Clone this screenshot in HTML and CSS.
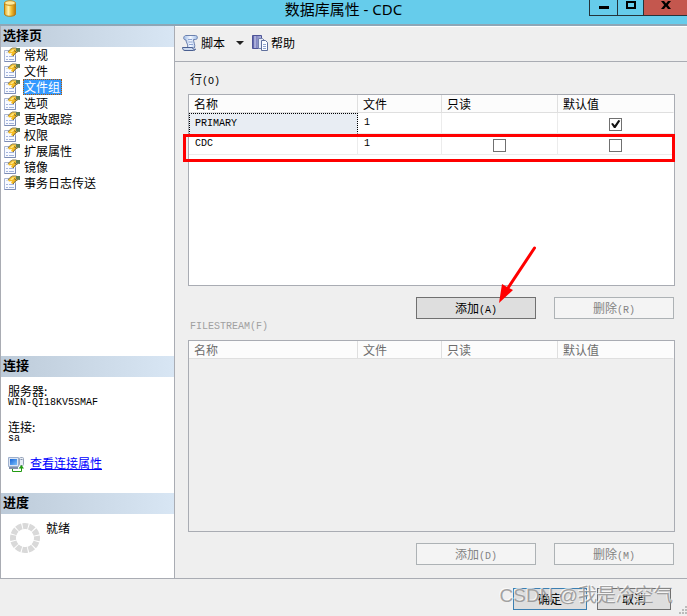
FILE: index.html
```html
<!DOCTYPE html>
<html lang="zh-CN">
<head>
<meta charset="utf-8">
<title>数据库属性 - CDC</title>
<link rel="stylesheet" href="styles.css">
</head>
<body>
<svg width="0" height="0" class="defs" aria-hidden="true">
  <defs>
    <linearGradient id="gold" x1="0" x2="1"><stop offset="0" stop-color="#e3a51c"/><stop offset=".35" stop-color="#fff3b0"/><stop offset=".6" stop-color="#f5c336"/><stop offset="1" stop-color="#b87506"/></linearGradient>
    <linearGradient id="book" x1="0" x2="1"><stop offset="0" stop-color="#5a5fa8"/><stop offset="1" stop-color="#b4b9e2"/></linearGradient>
    <linearGradient id="scroll" x1="0" x2="1"><stop offset="0" stop-color="#9fbbe6"/><stop offset=".5" stop-color="#f4f8ff"/><stop offset="1" stop-color="#9fbbe6"/></linearGradient>
    <linearGradient id="screen" x1="0" y1="0" x2="1" y2="1"><stop offset="0" stop-color="#1765d8"/><stop offset="1" stop-color="#7cc0fb"/></linearGradient>
    <symbol id="page" viewBox="0 0 16 16">
      <path d="M.5 3.500h11v11h-11z" fill="#f8faff" stroke="#a9b5d2"/>
      <path d="M.5 14.500h11v-6" fill="none" stroke="#7d8db5"/>
      <path d="M2 9.500h2m1 0h5M2 12.500h2m1 0h5" stroke="#a3b5de"/>
      <path d="M2 5.500h2" stroke="#d2daec"/>
      <path d="M4 5l2-2.500L8.500 1l4 .5V5L11 6.500 9 9 7 8l1-2-3 .5z" fill="#f5bd25"/>
      <path d="M4 5l2-2.500L8.500 1h4" fill="none" stroke="#8d8258"/>
      <path d="M6 5l2.500-2.500H11L8 5z" fill="#ffe987"/>
      <path d="M12 1h4v4l-4-.5z" fill="#5f7d55"/>
      <path d="M9 9l2.500-3 2.500-1.500M10 3.500l2 1.500" fill="none" stroke="#80631d"/>
    </symbol>
  </defs>
</svg>
<header class="titlebar">
  <svg class="db-icon" viewBox="0 0 12 17" aria-hidden="true"><path d="M.5 3v11c0 3 11 3 11 0V3z" fill="url(#gold)" stroke="#b67b12"/><ellipse cx="6" cy="3" rx="5.500" ry="2.300" fill="#ffe99a" stroke="#c18b1d"/></svg>
  <h1>数据库属性 - CDC</h1>
  <div class="window-controls">
    <button class="minimize" aria-label="最小化"><svg viewBox="0 0 12 12"><path d="M1 6h10v3H1z"/></svg></button>
    <button class="maximize" aria-label="最大化"><svg viewBox="0 0 12 12"><path fill-rule="evenodd" d="M1 1h10v8H1zM3 3v4h6V3z"/></svg></button>
    <button class="close" aria-label="关闭"><svg viewBox="0 0 12 12"><path d="M1 1h3l2 2.500L8 1h3L7.800 5 11 9H8L6 6.500 4 9H1l3.200-4z"/></svg></button>
  </div>
</header>
<div class="workspace">
  <aside class="sidebar">
    <h2>选择页</h2>
    <nav class="pages">
      <a href="#"><svg><use href="#page"/></svg><span>常规</span></a>
      <a href="#"><svg><use href="#page"/></svg><span>文件</span></a>
      <a href="#" class="selected" aria-current="page"><svg><use href="#page"/></svg><span>文件组</span></a>
      <a href="#"><svg><use href="#page"/></svg><span>选项</span></a>
      <a href="#"><svg><use href="#page"/></svg><span>更改跟踪</span></a>
      <a href="#"><svg><use href="#page"/></svg><span>权限</span></a>
      <a href="#"><svg><use href="#page"/></svg><span>扩展属性</span></a>
      <a href="#"><svg><use href="#page"/></svg><span>镜像</span></a>
      <a href="#"><svg><use href="#page"/></svg><span>事务日志传送</span></a>
    </nav>
    <h2>连接</h2>
    <section class="connection">
      <dl>
        <dt>服务器:</dt><dd>WIN-QI18KV5SMAF</dd>
        <dt>连接:</dt><dd>sa</dd>
      </dl>
      <div class="view-link">
        <svg viewBox="0 0 16 16" aria-hidden="true"><path d="M.5.500h10v9H.5z" fill="#dce6f5" stroke="#9fb0cc"/><path d="M2 2h7v6H2z" fill="url(#screen)"/><path d="M1 11h9" stroke="#8190a9" stroke-width="2"/><rect x="11.500" y=".5" width="4" height="8" rx="1" fill="#e8edf5" stroke="#98a5bb"/><path d="M12.500 2.500h2" stroke="#8493ad"/><path d="M4.500 12v2.500h9V10" fill="none" stroke="#239b12"/><path d="M10.500 11.500l3-3.500 2.500 3.500z" fill="#239b12"/></svg>
        <a href="#">查看连接属性</a>
      </div>
    </section>
    <h2>进度</h2>
    <section class="progress">
      <svg viewBox="0 0 30 30" aria-hidden="true"><circle cx="15" cy="15" r="12" fill="none" stroke="#d9d9d9" stroke-width="6" stroke-dasharray="5.280 1" stroke-dashoffset="2.600"/></svg>
      <span>就绪</span>
    </section>
  </aside>
  <main>
    <div class="toolbar">
      <button><svg viewBox="0 0 16 16"><path d="M3.500.500h10c2.500 0 2.500 4 0 4h-2c0 3 2 5 1 8.500H5c2-3-1-5-1-8-3 0-3-3.500-.5-4.500z" fill="url(#scroll)" stroke="#6b80ad"/><path d="M.5 12.500h10c0 2 2 2.500 3 1.500 0 1-1 1.500-2 1.500H3c-1.500 0-2.500-1-2.500-3z" fill="#cbd9ef" stroke="#4a5f90"/><path d="M6 4.500h4M6.500 7h4M7 9.500h4" stroke="#8ea5d2"/></svg>脚本<i class="caret"></i></button>
      <button><svg viewBox="0 0 16 16"><path d="M.5.500h9v13h-9z" fill="url(#book)" stroke="#4e5497"/><path d="M3 1v12" stroke="#dfe2f7"/><path d="M6.500 3.500h4l2 2v8h-6z" fill="#e7ecf9" stroke="#7482ae"/><path d="M9.500 5.500h4l2 2v8h-6z" fill="#fafcff" stroke="#5f6f9c"/><path d="M11 9.500h3M11 11.500h3M11 13.500h3" stroke="#8fa3d0"/></svg>帮助</button>
    </div>
    <div class="content">
      <h3 class="rows-label">行<span class="latin">(O)</span></h3>
      <div class="panel">
        <table>
          <colgroup><col class="c-name"><col class="c-files"><col class="c-read"><col></colgroup>
          <thead><tr><th>名称</th><th>文件</th><th>只读</th><th>默认值</th></tr></thead>
          <tbody>
            <tr><td class="current">PRIMARY</td><td>1</td><td></td><td class="tick"><input type="checkbox" checked aria-label="PRIMARY 默认值"></td></tr>
            <tr><td>CDC</td><td>1</td><td class="tick"><input type="checkbox" aria-label="CDC 只读"></td><td class="tick"><input type="checkbox" aria-label="CDC 默认值"></td></tr>
          </tbody>
        </table>
        <div class="highlight"></div>
      </div>
      <div class="actions">
        <button class="btn">添加<span class="latin">(A)</span></button>
        <button class="btn" disabled>删除<span class="latin">(R)</span></button>
        <svg class="arrow" viewBox="0 0 40 58" aria-hidden="true"><path d="M36.500 2L10 42" stroke="#f00" stroke-width="3" stroke-linecap="round"/><path d="M1 57L4 38l5 3 6 3z" fill="#f00"/></svg>
      </div>
      <h3 class="stream-label latin">FILESTREAM(F)</h3>
      <div class="panel inactive">
        <table>
          <colgroup><col class="c-name"><col class="c-files"><col class="c-read"><col></colgroup>
          <thead><tr><th>名称</th><th>文件</th><th>只读</th><th>默认值</th></tr></thead>
        </table>
      </div>
      <div class="actions">
        <button class="btn" disabled>添加<span class="latin">(D)</span></button>
        <button class="btn" disabled>删除<span class="latin">(M)</span></button>
      </div>
    </div>
  </main>
</div>
<footer>
  <button class="btn default">确定</button>
  <button class="btn">取消</button>
  <div class="watermark">CSDN @我是冷空气</div>
  <svg class="grip" viewBox="0 0 10 10" aria-hidden="true"><path d="M8 0h2v2H8zM5 3h2v2H5zM8 3h2v2H8zM2 6h2v2H2zM5 6h2v2H5zM8 6h2v2H8z" fill="#bbb"/></svg>
</footer>
</body>
</html>
```
FILE: styles.css
```css
* { box-sizing: border-box; }

body {
  margin: 0;
  height: 100vh;
  display: flex;
  flex-direction: column;
  overflow: hidden;
  background: #efefef;
  color: #000;
  font: 12px/16px "Noto Sans CJK SC", sans-serif;
}

h1, h2, h3, dl, dd { margin: 0; font-weight: normal; }
button { font: inherit; color: inherit; padding: 0; }
svg { flex: none; }
.defs { position: absolute; }

.latin, dd, td {
  font-family: "Liberation Mono", monospace;
  font-size: 10px;
}

.titlebar {
  flex: none;
  height: 26px;
  display: grid;
  grid-template-columns: 1fr auto 1fr;
  align-items: start;
  background: #66cceb;
  border-bottom: 2px solid #8ea6b6;
}
.titlebar h1 { font: 15px/18px "Noto Sans", "Noto Sans CJK SC", sans-serif; }
.db-icon { width: 12px; height: 17px; margin-left: 4px; }
.window-controls { display: flex; justify-content: flex-end; }
.window-controls button {
  height: 16px;
  border: 1px solid #24343b;
  border-top: 0;
  border-right: 0;
  background: none;
  display: flex;
  justify-content: center;
}
.window-controls svg { width: 12px; height: 12px; }
.window-controls .minimize { width: 28px; }
.window-controls .maximize { width: 26px; }
.window-controls .close { width: 44px; background: #c4574e; }

.workspace {
  flex: 1;
  min-height: 0;
  display: flex;
  border-bottom: 1px solid #a9acb3;
}

.sidebar {
  flex: none;
  width: 175px;
  display: flex;
  flex-direction: column;
  background: #fff;
  border-left: 1px solid #a9acb3;
  border-right: 1px solid #a9acb3;
}
.sidebar h2 {
  flex: none;
  height: 21px;
  padding-left: 2px;
  background: linear-gradient(90deg, #bdcbd9, #d8e6f4);
  font-size: 13px;
  line-height: 18px;
  font-weight: bold;
}
.pages { flex: 1; }
.pages a {
  display: flex;
  gap: 3px;
  padding-left: 3px;
  color: #000;
  text-decoration: none;
}
.pages svg { width: 16px; height: 16px; }
.pages span { padding: 0 2px 0 1px; }
.pages .selected span {
  background: #3399ff;
  color: #fff;
  outline: 1px dotted #b85a00;
  outline-offset: -1px;
}

.connection { flex: none; height: 116px; padding: 8px 7px; }
dt, dd { line-height: 12px; }
dd { margin-bottom: 12px; }
dd:last-child { margin-bottom: 10px; }
.view-link { display: flex; gap: 6px; }
.view-link svg { width: 16px; height: 16px; margin-top: 2px; }
.view-link a { color: #00f; }

.progress { flex: none; height: 64px; display: flex; gap: 6px; padding: 6px 9px; }
.progress svg { width: 30px; height: 30px; margin-top: 3px; }

main { flex: 1; min-width: 0; display: flex; flex-direction: column; }
.toolbar {
  flex: none;
  height: 36px;
  display: flex;
  align-items: center;
  gap: 8px;
  padding: 0 7px 2px;
  border-top: 1px solid #fff;
  border-bottom: 1px solid #a9acb3;
}
.toolbar button { display: flex; align-items: center; gap: 3px; border: 0; background: none; }
.toolbar svg { width: 16px; height: 16px; }
.caret {
  margin-left: 8px;
  border: 4px solid transparent;
  border-top-color: #222;
  border-bottom: 0;
}

.content {
  flex: 1;
  min-height: 0;
  display: flex;
  flex-direction: column;
  padding: 0 12px 13px 13px;
}
h3 { padding-left: 2px; }
.rows-label { height: 32px; padding-top: 9px; font-size: 12px; }
.stream-label { height: 21px; line-height: 15px; color: #a0a0a0; }

.panel {
  position: relative;
  flex: 1;
  min-height: 0;
  border: 1px solid #a9acb3;
  background: #fff;
}
.inactive { background: #efefef; color: #6d6d6d; }
table { width: 100%; border-collapse: separate; border-spacing: 0; table-layout: fixed; }
.c-name { width: 169px; }
.c-files { width: 84px; }
.c-read { width: 116px; }
th {
  height: 18px;
  padding: 0 0 0 5px;
  background: #fcfcfc;
  border-right: 1px solid #dfdfdf;
  border-bottom: 1px solid #dfdfdf;
  text-align: left;
  font-weight: normal;
  line-height: 16px;
}
td {
  height: 21px;
  padding: 0 6px;
  border-right: 1px solid #ececec;
  border-bottom: 1px solid #ececec;
}
th:last-child, td:last-child { border-right-color: transparent; }
.current { background: #e8edf3; border: 1px dotted #000; border-bottom-color: #e8edf3; padding-left: 5px; }
.tick { text-align: center; padding: 0; line-height: 0; }
.tick input {
  appearance: none;
  width: 13px;
  height: 13px;
  margin: 2px 0 0;
  border: 1px solid #707070;
  background: #fff;
}
.tick input:checked::after {
  content: "";
  display: block;
  height: 11px;
  background: #111;
  clip-path: polygon(10% 48%, 26% 40%, 43% 62%, 76% 14%, 94% 20%, 50% 86%, 36% 86%);
}
.highlight {
  position: absolute;
  top: 39px;
  left: -6px;
  right: -1px;
  height: 28px;
  border: 3px solid #f00;
  pointer-events: none;
}

.actions {
  position: relative;
  flex: none;
  display: flex;
  justify-content: flex-end;
  gap: 18px;
  margin-top: 11px;
  padding-right: 1px;
}
.btn {
  width: 120px;
  height: 22px;
  border: 1px solid #707070;
  background: #dedede;
  line-height: 20px;
}
.btn:disabled { border-color: #adb2b5; background: #f4f4f4; color: #838383; }
.arrow { position: absolute; right: 137px; bottom: 15px; width: 40px; height: 58px; fill: none; }

footer {
  position: relative;
  flex: none;
  height: 37px;
  display: flex;
  justify-content: flex-end;
  gap: 10px;
  padding: 9px 16px;
}
footer .btn { width: 74px; }
footer .default { border-color: #3c7fb1; }
.watermark {
  position: absolute;
  right: 14px;
  top: 4px;
  font: 19px/26px "Liberation Sans", "Noto Sans CJK SC", sans-serif;
  color: rgba(140, 140, 140, .8);
  text-shadow: -1px -1px 0 rgba(255, 255, 255, .7);
  white-space: nowrap;
  pointer-events: none;
}
.grip { position: absolute; right: 0; bottom: 0; width: 10px; height: 10px; }
```
